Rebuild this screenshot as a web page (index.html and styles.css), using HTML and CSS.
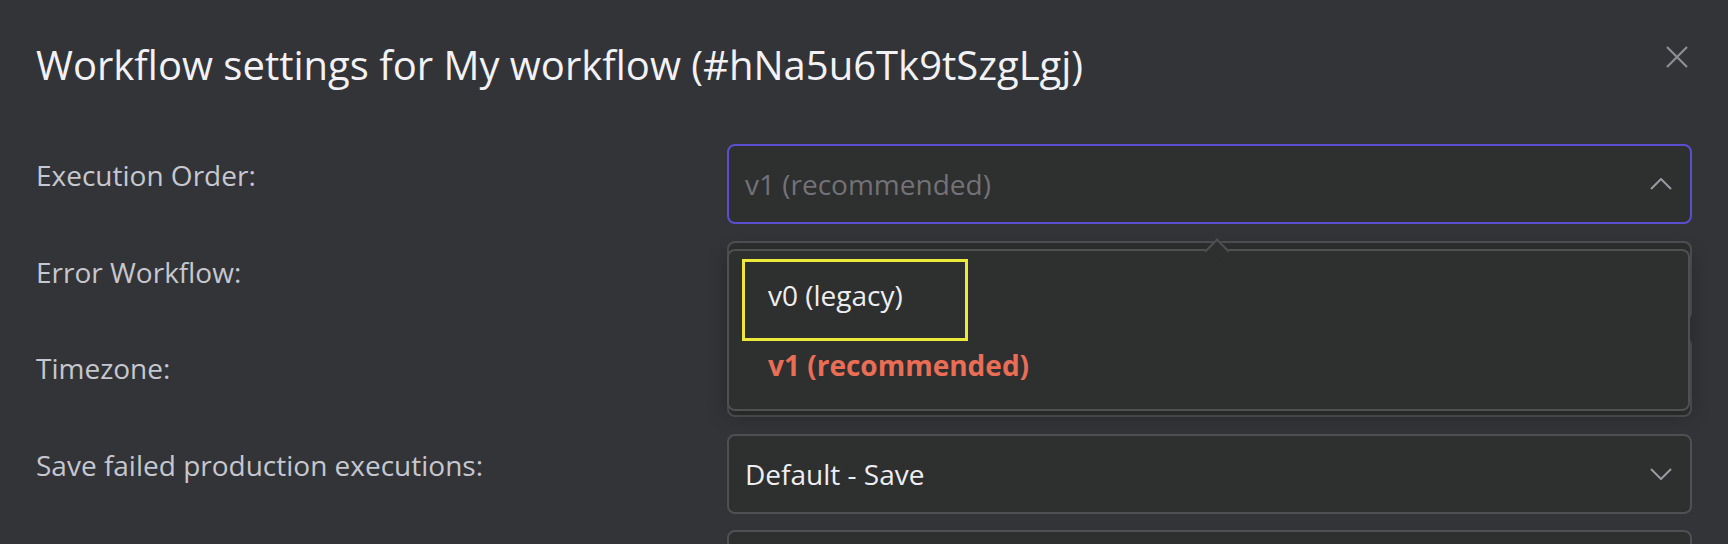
FILE: index.html
```html
<!DOCTYPE html>
<html lang="en">
<head>
<meta charset="utf-8">
<title>Workflow settings</title>
<link rel="stylesheet" href="styles.css">
</head>
<body>
<div class="dialog">
  <header class="dialog-header">
    <h1 class="dialog-title">Workflow settings for My workflow (#hNa5u6Tk9tSzgLgj)</h1>
    <button class="close-btn" aria-label="Close">
      <svg width="22" height="22" viewBox="0 0 22 22"><path d="M1 1 L21 21 M21 1 L1 21" stroke="#8e8e94" stroke-width="2.2" fill="none"/></svg>
    </button>
  </header>
  <div class="form">
    <div class="label">Execution Order:</div>
    <div class="field">
      <div class="select focused">
        <span class="placeholder">v1 (recommended)</span>
        <svg class="chev" width="22" height="12" viewBox="0 0 22 12"><path d="M1 11 L11 1 L21 11" stroke="#9a9aa2" stroke-width="2" fill="none"/></svg>
      </div>
      <div class="popper">
        <span class="popper-arrow"></span>
        <ul class="options">
          <li class="option hovered">v0 (legacy)</li>
          <li class="option selected">v1 (recommended)</li>
        </ul>
        <span class="annot"></span>
      </div>
    </div>

    <div class="label">Error Workflow:</div>
    <div class="field"><div class="select"></div></div>

    <div class="label">Timezone:</div>
    <div class="field"><div class="select"></div></div>

    <div class="label">Save failed production executions:</div>
    <div class="field">
      <div class="select">
        <span class="value">Default - Save</span>
        <svg class="chev" width="22" height="12" viewBox="0 0 22 12"><path d="M1 1 L11 11 L21 1" stroke="#9a9aa2" stroke-width="2" fill="none"/></svg>
      </div>
    </div>

    <div class="label"></div>
    <div class="field"><div class="select"></div></div>
  </div>
</div>
</body>
</html>
```
FILE: styles.css
```css
html, body {
  margin: 0;
  padding: 0;
  background: #333437;
  height: 100%;
  overflow: hidden;
}
body {
  font-family: "Open Sans", "Noto Sans", sans-serif;
}
.dialog {
  position: relative;
  box-sizing: border-box;
  height: 100vh;
  overflow: hidden;
  padding: 38px 36px 0 36px;
}
.dialog-header {
  display: flex;
  align-items: flex-start;
}
.dialog-title {
  margin: 0;
  font-size: 40px;
  line-height: 54px;
  font-weight: 400;
  color: #f2f2f6;
  letter-spacing: 0;
}
.close-btn {
  position: absolute;
  top: 46px;
  right: 40px;
  width: 22px;
  height: 22px;
  padding: 0;
  border: 0;
  background: transparent;
  display: block;
}
.close-btn svg { display: block; }
.form {
  margin-top: 52px;
  display: grid;
  grid-template-columns: 691px 1fr;
  grid-template-rows: 80px 80px 80px 80px 80px;
  row-gap: 16.5px;
}
.label {
  font-size: 28px;
  line-height: 40px;
  padding-top: 11px;
  color: #c6c7cf;
}
.field {
  position: relative;
}
.select {
  box-sizing: border-box;
  height: 80px;
  border: 2px solid #4f5052;
  border-radius: 8px;
  background: #2e2f2f;
  display: flex;
  align-items: center;
  padding: 0 18px 0 16px;
  font-size: 28px;
  color: #eeeef2;
}
.select.focused {
  border-color: #5a4fcf;
}
.placeholder {
  color: #727278;
  flex: 1;
}
.value {
  flex: 1;
}
.chev {
  margin-left: auto;
  display: block;
}
.popper {
  position: absolute;
  top: 105px;
  left: 0;
  right: 2px;
  z-index: 5;
  box-sizing: border-box;
  height: 162px;
  background: #2e2f2f;
  border: 2px solid #4f5052;
  border-radius: 8px;
  box-shadow: 0 4px 20px rgba(0, 0, 0, 0.25);
}
.popper-arrow {
  position: absolute;
  top: -9px;
  left: 479px;
  width: 16px;
  height: 16px;
  background: #2e2f2f;
  border-top: 2px solid #4f5052;
  border-left: 2px solid #4f5052;
  transform: rotate(45deg);
}
.options {
  list-style: none;
  margin: 0;
  padding: 9px 0;
}
.option {
  height: 70px;
  line-height: 70px;
  padding-left: 39px;
  font-size: 28px;
  color: #eeeef2;
}
.option.selected {
  color: #ea6d56;
  font-weight: 700;
}
.annot {
  position: absolute;
  left: 13px;
  top: 8px;
  width: 226px;
  height: 82px;
  box-sizing: border-box;
  border: 3px solid #ece93a;
}
```
